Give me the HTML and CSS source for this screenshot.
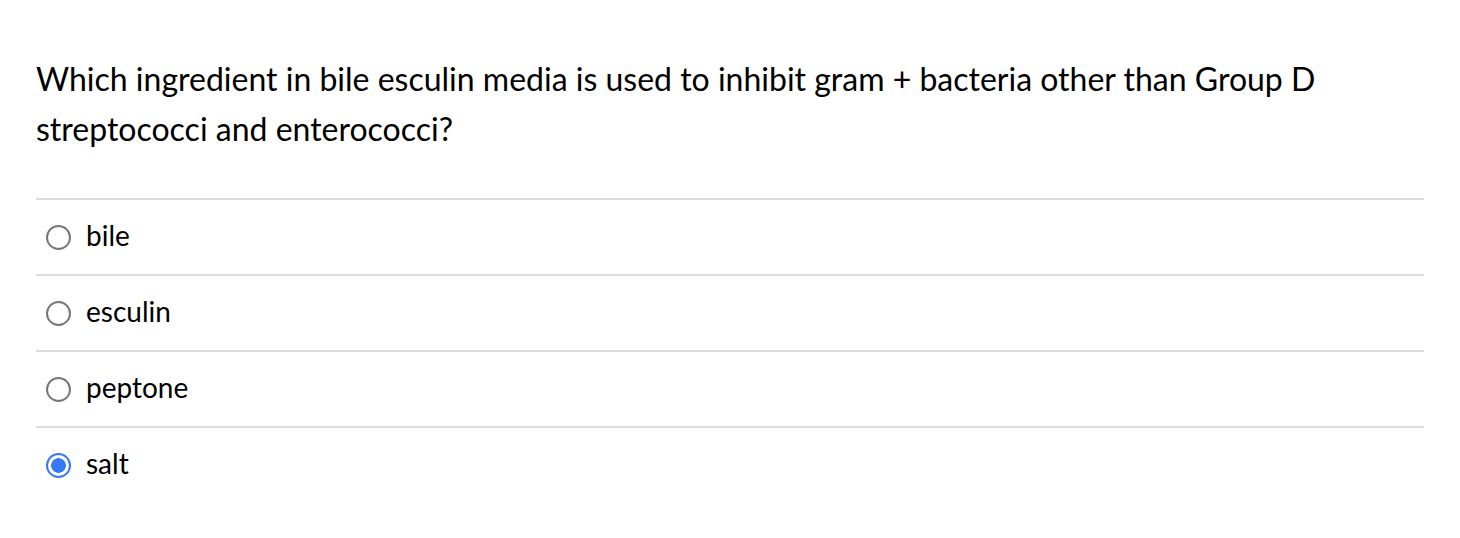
FILE: index.html
```html
<!DOCTYPE html>
<html>
<head>
<meta charset="utf-8">
<link rel="stylesheet" href="styles.css">
</head>
<body>
<div class="question">
  <p class="prompt">Which ingredient in bile esculin media is used to inhibit gram + bacteria other than Group D streptococci and enterococci?</p>
  <div class="options">
    <label class="option"><span class="radio"></span><span class="text">bile</span></label>
    <label class="option"><span class="radio"></span><span class="text">esculin</span></label>
    <label class="option"><span class="radio"></span><span class="text">peptone</span></label>
    <label class="option selected"><span class="radio"></span><span class="text">salt</span></label>
  </div>
</div>
</body>
</html>
```
FILE: styles.css
```css
html, body { margin: 0; padding: 0; background: #fff; }
body { font-family: Lato, "Open Sans", sans-serif; color: #000; }
.question { padding: 54px 36px 0 36px; width: 1388px; }
.prompt { margin: 0 0 44px 0; font-size: 32px; line-height: 50px; }
.options { display: flex; flex-direction: column; }
.option { display: flex; align-items: center; gap: 15px; height: 74px; border-top: 2px solid #dcdcdc; padding-left: 10px; font-size: 28px; }
.text { padding-bottom: 4px; }
.radio { flex: none; width: 25px; height: 25px; border: 2px solid #767676; border-radius: 50%; box-sizing: border-box; }
.selected .radio { border: 2px solid #3478f6; background: radial-gradient(circle, #3478f6 0 7px, #fff 7.6px); }
```
